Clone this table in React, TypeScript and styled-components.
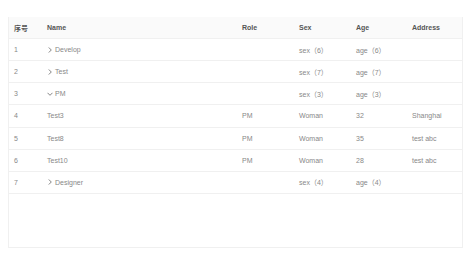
import React from "react"
import styled, { createGlobalStyle } from "styled-components"

type TRow = {
    no: number
    name: string
    role?: string
    sex: string
    age: string
    address?: string
    toggle?: "closed" | "open"
}

const rows: TRow[] = [
    { no: 1, name: "Develop", sex: "sex（6）", age: "age（6）", toggle: "closed" },
    { no: 2, name: "Test", sex: "sex（7）", age: "age（7）", toggle: "closed" },
    { no: 3, name: "PM", sex: "sex（3）", age: "age（3）", toggle: "open" },
    { no: 4, name: "Test3", role: "PM", sex: "Woman", age: "32", address: "Shanghai" },
    { no: 5, name: "Test8", role: "PM", sex: "Woman", age: "35", address: "test abc" },
    { no: 6, name: "Test10", role: "PM", sex: "Woman", age: "28", address: "test abc" },
    { no: 7, name: "Designer", sex: "sex（4）", age: "age（4）", toggle: "closed" },
]

const Chevron = (props: { open: boolean }) => (
    <ChevronBox>
        <svg width="6" height="6" viewBox="0 0 6 6">
            <path
                d={props.open ? "M0.5 1.8 L3 4.3 L5.5 1.8" : "M1.8 0.5 L4.3 3 L1.8 5.5"}
                fill="none"
                stroke="#777"
                strokeWidth="0.9"/>
        </svg>
    </ChevronBox>
)

export default function App() {
    return (
        <>
            <Global/>
            <Page>
                <Table>
                    <HeadRow>
                        <HeadCell>序号</HeadCell>
                        <HeadCell>Name</HeadCell>
                        <HeadCell>Role</HeadCell>
                        <HeadCell>Sex</HeadCell>
                        <HeadCell>Age</HeadCell>
                        <HeadCell>Address</HeadCell>
                    </HeadRow>
                    {rows.map(row => (
                        <BodyRow key={row.no}>
                            <Cell>{row.no}</Cell>
                            <Cell>
                                {row.toggle && <Chevron open={row.toggle === "open"}/>}
                                {row.name}
                            </Cell>
                            <Cell>{row.role}</Cell>
                            <Cell>{row.sex}</Cell>
                            <Cell>{row.age}</Cell>
                            <Cell>{row.address}</Cell>
                        </BodyRow>
                    ))}
                </Table>
            </Page>
        </>
    )
}

const Global = createGlobalStyle`
    body {
        margin: 0;
        background: #ffffff;
        font-family: "Liberation Sans", "Noto Sans CJK SC", sans-serif;
    }
`

const Page = styled.div`
    padding: 17px 11px 0 8px;
`

const Table = styled.div`
    box-sizing: border-box;
    height: 231px;
    border: 1px solid #f0f0f0;
    border-top: none;
`

const columns = "33px 195px 57px 57px 56px 1fr"

const HeadRow = styled.div`
    display: grid;
    grid-template-columns: ${columns};
    height: 22px;
    box-sizing: border-box;
    background: #fafafa;
    border-bottom: 1px solid #f0f0f0;
`

const BodyRow = styled.div`
    display: grid;
    grid-template-columns: ${columns};
    height: 22.15px;
    box-sizing: border-box;
    border-bottom: 1px solid #f0f0f0;
`

const HeadCell = styled.div`
    display: flex;
    align-items: center;
    padding-left: 5px;
    font-size: 7px;
    font-weight: 700;
    color: #555;
`

const Cell = styled.div`
    display: flex;
    align-items: center;
    padding-left: 5px;
    font-size: 7px;
    color: #888;
    white-space: nowrap;
`

const ChevronBox = styled.span`
    display: inline-flex;
    width: 8px;
`
